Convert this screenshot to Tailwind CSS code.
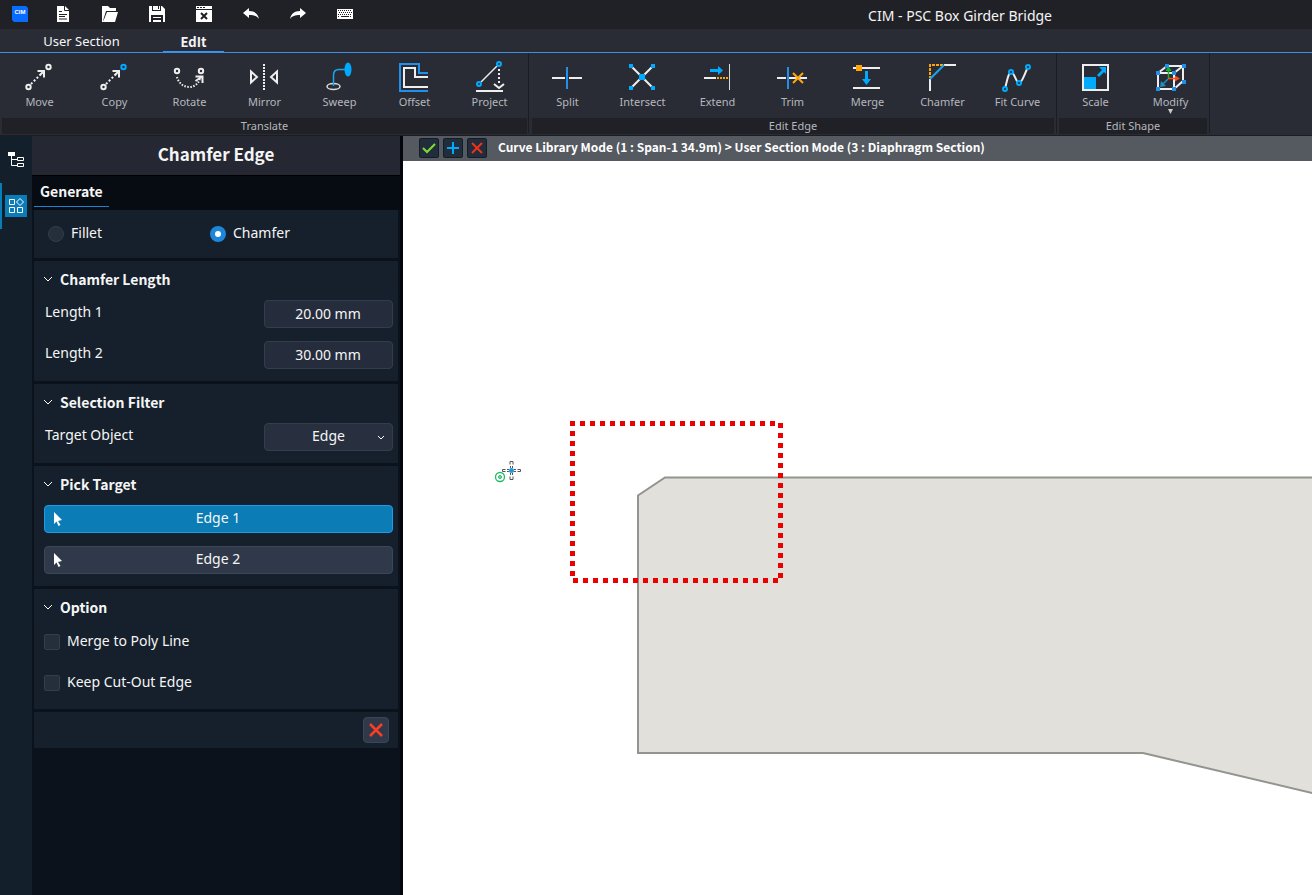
<!DOCTYPE html>
<html lang="en">
<head>
<meta charset="utf-8">
<title>CIM - PSC Box Girder Bridge</title>
<script src="https://cdn.jsdelivr.net/npm/@tailwindcss/browser@4"></script>
</head>
<body class="flex min-h-screen flex-col bg-[#0b121c] font-['Noto_Sans',sans-serif] text-sm text-[#f5f5f5]">

<header class="flex h-[29px] items-center bg-[#202126] pb-px">
  <div class="flex w-10 justify-center">
    <svg width="16" height="16" viewBox="0 0 16 16" aria-label="CIM"><path fill="#0a6cff" d="M0 0h14l2 2v14H2l-2-2z"/><text x="8" y="8" text-anchor="middle" font-size="6" font-weight="700" font-family="Liberation Sans, sans-serif" fill="#fff">CIM</text></svg>
  </div>
  <nav class="flex" aria-label="Quick access">
    <button class="flex w-[47px] justify-center pr-px" aria-label="New"><svg width="16" height="16" viewBox="0 0 16 16"><path fill="#fff" d="M2 0h8l4 4v12H2z"/><path stroke="#202126" d="M4 5.500h3M4 8.500h8M4 10.500h6M4 13h8M9.500 0v4.500H14" fill="none"/></svg></button>
    <button class="flex w-[47px] justify-center pr-px" aria-label="Open"><svg width="16" height="16" viewBox="0 0 16 16"><path fill="#fff" d="M0 0h6l2 2h6v3H4L1.500 13V16H0z"/><path fill="#fff" d="M5 6h11l-3 10H1z"/></svg></button>
    <button class="flex w-[47px] justify-center pr-px" aria-label="Save"><svg width="16" height="16" viewBox="0 0 16 16"><path fill="#fff" d="M0 0h3v5h9V0h1l3 3v13h-2V9H2v7H0zM5 0h4v3H5zM10 0h1v4H4V0h1v3h5zM4 11h8v1H4zM4 14h8v2H4z"/></svg></button>
    <button class="flex w-[47px] justify-center pr-px" aria-label="Close file"><svg width="16" height="16" viewBox="0 0 16 16"><path fill="#fff" d="M0 0h16v3H0zM0 4h16v12H0z"/><path stroke="#202126" d="M1 1.500h2M4 1.500h2M7 1.500h2"/><path stroke="#202126" stroke-width="2" d="M5 7l6 6M11 7l-6 6"/></svg></button>
    <button class="flex w-[47px] justify-center pr-px" aria-label="Undo"><svg width="16" height="16" viewBox="0 0 16 16"><path fill="#fff" d="M0 7l6-5v3c6 0 9 3 10 8-2-3-5-4-10-4v3z"/></svg></button>
    <button class="flex w-[47px] justify-center pr-px" aria-label="Redo"><svg width="16" height="16" viewBox="0 0 16 16"><path fill="#fff" d="M16 7l-6-5v3C4 5 1 8 0 13c2-3 5-4 10-4v3z"/></svg></button>
    <button class="flex w-[47px] justify-center pr-px" aria-label="Keyboard"><svg width="16" height="16" viewBox="0 0 16 16"><path fill="#fff" d="M0 3h16v10H0z"/><path stroke="#202126" stroke-dasharray="1 1" d="M1 4.500h14M2 6.500h13M1 8.500h14M1 10.500h2M13 10.500h2"/><path stroke="#202126" d="M4 10.500h8"/></svg></button>
  </nav>
  <h1 class="mr-[260px] ml-auto whitespace-nowrap pt-1">CIM - PSC Box Girder Bridge</h1>
</header>

<nav class="flex h-6 border-b border-[#3a8fe8] bg-[#2a2c35] text-[13px]" aria-label="Ribbon tabs">
  <a href="#" class="flex w-[163px] items-center justify-center pt-0.5">User Section</a>
  <a href="#" class="flex w-[61px] items-center justify-center border-b border-[#3a96f5] pt-1 font-semibold font-['Noto_Sans_CJK_KR',sans-serif]">EdIt</a>
</nav>

<div class="flex h-[83px] border-b border-[#1c1d22] bg-[#2a2c35] pl-0.5 text-[11px] text-[#b4b7be]">
  <section class="flex flex-col">
    <div class="flex h-[65px]">
      <button class="flex w-[75px] flex-col items-center gap-px pt-2"><svg width="33" height="32" viewBox="0 0 33 32" fill="none" stroke="#eee" stroke-width="2"><circle cx="5.500" cy="26" r="2.200"/><circle cx="25.500" cy="6" r="2.200"/><path stroke-dasharray="2 2" d="M8 23L20 11"/><path d="M14.500 10h6.500v6.500M21 10l-4 4"/></svg><span>Move</span></button>
      <button class="flex w-[75px] flex-col items-center gap-px pt-2"><svg width="33" height="32" viewBox="0 0 33 32" fill="none" stroke="#eee" stroke-width="2"><circle cx="5.500" cy="26" r="2.200"/><circle cx="25.500" cy="6" r="2.200" stroke="#00aaff"/><path stroke-dasharray="2 2" d="M8 23L20 11"/><path d="M14.500 10h6.500v6.500M21 10l-4 4"/></svg><span>Copy</span></button>
      <button class="flex w-[75px] flex-col items-center gap-px pt-2"><svg width="33" height="32" viewBox="0 0 33 32" fill="none" stroke="#eee" stroke-width="2"><circle cx="4" cy="10" r="2.200"/><circle cx="28" cy="10" r="2.200"/><path stroke-dasharray="1.500 1.500" d="M4 16c1 5 6 10 12 10s10-4 11-9"/><path d="M22.500 15.500h7v6.500M22.500 20l6-4"/></svg><span>Rotate</span></button>
      <button class="flex w-[75px] flex-col items-center gap-px pt-2"><svg width="33" height="32" viewBox="0 0 33 32" fill="none" stroke="#eee" stroke-width="2"><path stroke-dasharray="2 1" d="M16 3v26"/><path d="M3 10.500v11l6-5.500zM29 10.500v11l-6-5.500z"/></svg><span>Mirror</span></button>
      <button class="flex w-[75px] flex-col items-center gap-px pt-2"><svg width="33" height="32" viewBox="0 0 33 32" fill="none"><ellipse cx="10.500" cy="25.500" rx="6.500" ry="3" stroke="#ddd" stroke-width="1.500"/><path stroke="#1ba4f2" stroke-width="1.500" d="M10.500 25V14q0-5.500 5.500-5.500h6"/><ellipse cx="25" cy="8.500" rx="3.500" ry="7" fill="#00aaff"/></svg><span>Sweep</span></button>
      <button class="flex w-[75px] flex-col items-center gap-px pt-2"><svg width="33" height="32" viewBox="1 0 33 32" fill="none" stroke-width="2"><path stroke="#2090ea" d="M31 12h-9V3H3v27h28"/><path stroke="#eee" d="M31 16H18V7H7v19h24"/></svg><span>Offset</span></button>
      <button class="flex w-[75px] flex-col items-center gap-px pt-2"><svg width="33" height="32" viewBox="0 0 33 32" fill="none" stroke="#eee" stroke-width="2"><path stroke-width="1.500" d="M8 21L24 5"/><path stroke-dasharray="2 2" d="M26 8v16"/><path d="M21 23l5 4 5-4M3 30h27"/><circle cx="6" cy="23" r="2" stroke="#00aaff"/><circle cx="26" cy="3" r="2" stroke="#00aaff"/></svg><span>Project</span></button>
    </div>
    <h2 class="h-4 bg-[#202126] text-center leading-4">Translate</h2>
  </section>
  <div class="mx-px h-20 w-px bg-[#1c1d22]"></div>
  <section class="flex flex-col">
    <div class="flex h-[65px]">
      <button class="flex w-[75px] flex-col items-center gap-px pt-2"><svg width="33" height="32" viewBox="0 0 33 32" stroke="#eee" stroke-width="2"><path d="M1 17h13M18 17h13"/><path stroke="#2090ea" d="M16 6v22"/></svg><span>Split</span></button>
      <button class="flex w-[75px] flex-col items-center gap-px pt-2"><svg width="33" height="32" viewBox="0 0 33 32"><path stroke="#eee" stroke-width="2" d="M5 5l22 22M27 5L5 27"/><path fill="#00aaff" d="M3 3h4v4H3zM25 3h4v4h-4zM3 25h4v4H3zM25 25h4v4h-4zM13 13h6v6h-6z"/></svg><span>Intersect</span></button>
      <button class="flex w-[75px] flex-col items-center gap-px pt-2"><svg width="33" height="32" viewBox="-1 0 33 32" stroke-width="2"><path stroke="#eee" d="M2 17h12"/><path stroke="#ffa50a" stroke-dasharray="2 1" d="M15 17h11"/><path stroke="#ddd" stroke-width="1" d="M27.500 3v26"/><path fill="#00aaff" stroke="none" d="M8 8h8V5l5 4.500-5 4.500v-3H8z"/></svg><span>Extend</span></button>
      <button class="flex w-[75px] flex-col items-center gap-px pt-2"><svg width="33" height="32" viewBox="0 0 33 32" stroke="#eee" stroke-width="2"><path d="M1 17h9M13 17h18"/><path stroke="#2090ea" d="M12 6v22"/><path stroke="#ffa50a" d="M17 12l10 10M27 12L17 22"/></svg><span>Trim</span></button>
      <button class="flex w-[75px] flex-col items-center gap-px pt-2"><svg width="33" height="32" viewBox="1 0 33 32"><path stroke="#eee" stroke-width="2" d="M3 7h27M3 27h27"/><path fill="#ffa50a" d="M6 4h6v6H6z"/><path fill="#00aaff" d="M15 10h3v8h3l-4.500 6-4.500-6h3z"/></svg><span>Merge</span></button>
      <button class="flex w-[75px] flex-col items-center gap-px pt-2"><svg width="33" height="32" viewBox="0 0 33 32" fill="none" stroke="#eee" stroke-width="2"><path d="M18 4h12M4 18v12"/><path stroke="#ffa50a" stroke-dasharray="3 1" d="M17 4H4v13"/><path stroke="#1ba4f2" d="M4 18L18 4"/></svg><span>Chamfer</span></button>
      <button class="flex w-[75px] flex-col items-center gap-px pt-2"><svg width="33" height="32" viewBox="0 0 33 32" fill="none" stroke="#eee" stroke-width="2"><path d="M4 28C6 20 7 12 10 11s5 11 8 11 5-8 9-16"/><g stroke="#00aaff" fill="#2a2c35"><circle cx="4" cy="28" r="2"/><circle cx="10" cy="11" r="2"/><circle cx="18" cy="22" r="2"/><circle cx="27" cy="6" r="2"/></g></svg><span>Fit Curve</span></button>
    </div>
    <h2 class="mr-px ml-0.5 h-4 bg-[#202126] text-center leading-4">Edit Edge</h2>
  </section>
  <div class="mx-px h-20 w-px bg-[#1c1d22]"></div>
  <section class="flex flex-col">
    <div class="flex h-[65px]">
      <button class="flex w-[75px] flex-col items-center gap-px pt-2"><svg width="33" height="32" viewBox="0 0 33 32"><path fill="none" stroke="#eee" stroke-width="2" d="M4 4h25v25H4z"/><path fill="#00aaff" d="M5 16h12v12H5zM20 6h7v7l-2-2-5 5-2-2 5-5z"/></svg><span>Scale</span></button>
      <button class="relative flex w-[75px] flex-col items-center gap-px pt-2"><svg width="33" height="32" viewBox="0 0 33 32"><path fill="none" stroke="#eee" stroke-width="2" d="M4 12h16v16H4zM4 12l9-7h16L20 12M29 5v15l-9 8"/><path stroke="#18b52a" stroke-width="1.500" d="M14.500 17V8"/><path fill="#18b52a" d="M11.500 10l3-5 3 5z"/><path stroke="#ff4b14" stroke-width="1.500" d="M14 17.500h8"/><path fill="#ff4b14" d="M21 14.500l5 3-5 3z"/><path stroke="#1a8fc8" stroke-width="1.500" d="M14 18l-5 5"/><path fill="#1a8fc8" d="M7 20l5 5-6 1z"/><path fill="#2090ea" d="M2 10h4v4H2zM18 10h4v4h-4zM2 26h4v4H2zM18 26h4v4h-4zM11 3h4v4h-4zM28 3h4v4h-4zM28 19h4v4h-4z"/></svg><span>Modify</span><svg class="absolute top-14" width="5" height="5" viewBox="0 0 5 5"><path fill="#ccc" d="M0 0h5L2.500 5z"/></svg></button>
    </div>
    <h2 class="mx-px h-4 bg-[#202126] text-center leading-4">Edit Shape</h2>
  </section>
  <div class="mx-px h-20 w-px bg-[#1c1d22]"></div>
</div>

<div class="flex grow">
  <nav class="flex w-8 flex-col bg-[#141f2c]" aria-label="Side panels">
    <button class="flex h-[47px] items-center justify-center pb-px" aria-label="Tree"><svg width="16" height="16" viewBox="0 0 16 16" fill="none" stroke="#fff"><path fill="#fff" stroke="none" d="M0 1h7v4H0z"/><path d="M3.500 5v9.500h6M3.500 8.500h6M9.500 6.500h6v3h-6zM9.500 12.500h6v3h-6z"/></svg></button>
    <button class="flex h-[46px] items-center justify-end border-l-2 border-[#0a7db8] pr-[5px]" aria-label="Library"><span class="bg-[#0a7db8] p-[3px]"><svg width="16" height="16" viewBox="0 0 16 16" fill="none" stroke="#fff"><path d="M1.500 1.500h5v5h-5zM1.500 9.500h5v5h-5zM9.500 9.500h5v5h-5zM12 .5L15.500 4 12 7.500 8.500 4z"/></svg></span></button>
  </nav>

  <aside class="flex w-[371px] flex-col border-r-3 border-[#03060a]">
    <h2 class="h-10 border-b border-black bg-[#252832] text-center text-[17px] leading-9 font-semibold font-['Noto_Sans_CJK_KR',sans-serif]">Chamfer Edge</h2>
    <div class="flex h-[34px] bg-[#070c12] pl-0.5">
      <a href="#" class="h-[31px] w-[75px] border-b border-[#1a83d8] pl-1.5 leading-[30px] font-semibold font-['Noto_Sans_CJK_KR',sans-serif]">Generate</a>
    </div>
    <div class="flex flex-col gap-[3px] pr-0.5 pl-0.5">
      <div class="flex h-12 items-center bg-[#15202c] pl-3.5">
        <label class="flex w-[162px] items-center gap-[7px]"><input type="radio" name="kind" class="size-4 appearance-none rounded-full border border-[#343d4a] bg-[#252e3b]"><span class="pb-0.5">Fillet</span></label>
        <label class="flex items-center gap-[7px]"><input type="radio" name="kind" checked class="size-4 appearance-none rounded-full border-5 border-[#1e86da] bg-white"><span class="pb-0.5">Chamfer</span></label>
      </div>

      <section class="h-[120px] bg-[#15202c] pr-[5px] pl-2.5">
        <h3 class="flex h-[39px] items-center gap-2 pb-[3px] font-semibold font-['Noto_Sans_CJK_KR',sans-serif]"><svg width="8" height="6" viewBox="0 0 8 6" fill="none" stroke="#fff"><path d="M0 1l4 4 4-4"/></svg>Chamfer Length</h3>
        <div class="flex h-[41px] justify-between"><label for="l1" class="pl-px leading-6">Length 1</label><input id="l1" value="20.00 mm" class="h-7 w-[129px] rounded-sm border border-[#333d4b] bg-[#252d3d] pr-px pb-0.5 text-center"></div>
        <div class="flex justify-between"><label for="l2" class="pl-px leading-6">Length 2</label><input id="l2" value="30.00 mm" class="h-7 w-[129px] rounded-sm border border-[#333d4b] bg-[#252d3d] pr-px pb-0.5 text-center"></div>
      </section>

      <section class="h-[79px] bg-[#15202c] pr-[5px] pl-2.5">
        <h3 class="flex h-[39px] items-center gap-2 pb-[3px] font-semibold font-['Noto_Sans_CJK_KR',sans-serif]"><svg width="8" height="6" viewBox="0 0 8 6" fill="none" stroke="#fff"><path d="M0 1l4 4 4-4"/></svg>Selection Filter</h3>
        <div class="flex justify-between"><label for="target" class="pl-px leading-6">Target Object</label>
          <div class="relative"><select id="target" class="h-7 w-[129px] appearance-none rounded-sm border border-[#333d4b] bg-[#28303f] pb-0.5 text-center"><option>Edge</option></select><svg class="pointer-events-none absolute top-3 right-2" width="8" height="6" viewBox="0 0 8 6" fill="none" stroke="#fff"><path d="M1 1l3 3 3-3"/></svg></div>
        </div>
      </section>

      <section class="h-[120px] bg-[#15202c] pr-[5px] pl-2.5">
        <h3 class="flex h-[39px] items-center gap-2 pb-[3px] font-semibold font-['Noto_Sans_CJK_KR',sans-serif]"><svg width="8" height="6" viewBox="0 0 8 6" fill="none" stroke="#fff"><path d="M0 1l4 4 4-4"/></svg>Pick Target</h3>
        <div class="flex flex-col gap-[13px]">
          <button class="flex h-7 items-center rounded-sm border border-[#1a9bf0] bg-[#0b7cb6] pr-[19px] pl-2"><svg width="10" height="14" viewBox="0 0 10 14"><path fill="#fff" d="M1 0l8 8-4 1 2.500 4-2 1L3.500 9.500 1 12z"/></svg><span class="grow pb-0.5">Edge 1</span></button>
          <button class="flex h-7 items-center rounded-sm border border-[#3b4656] bg-[#2f394a] pr-[19px] pl-2"><svg width="10" height="14" viewBox="0 0 10 14"><path fill="#fff" d="M1 0l8 8-4 1 2.500 4-2 1L3.500 9.500 1 12z"/></svg><span class="grow pb-0.5">Edge 2</span></button>
        </div>
      </section>

      <section class="h-[120px] bg-[#15202c] pr-[5px] pl-2.5">
        <h3 class="flex h-[39px] items-center gap-2 pb-[3px] font-semibold font-['Noto_Sans_CJK_KR',sans-serif]"><svg width="8" height="6" viewBox="0 0 8 6" fill="none" stroke="#fff"><path d="M0 1l4 4 4-4"/></svg>Option</h3>
        <label class="flex h-7 items-center gap-[7px]"><input type="checkbox" class="size-4 appearance-none rounded-xs border border-[#343d4a] bg-[#252e3b]"><span class="pb-0.5">Merge to Poly Line</span></label>
        <label class="mt-[13px] flex h-7 items-center gap-[7px]"><input type="checkbox" class="size-4 appearance-none rounded-xs border border-[#343d4a] bg-[#252e3b]"><span class="pb-0.5">Keep Cut-Out Edge</span></label>
      </section>

      <div class="flex h-9 items-center justify-end bg-[#15202c] pr-[9px]">
        <button class="flex size-[26px] items-center justify-center rounded-sm border border-[#3b4656] bg-[#2f394a]" aria-label="Close"><svg width="14" height="14" viewBox="0 0 14 14"><path stroke="#ff3d22" stroke-width="2.500" d="M1 1l12 12M13 1L1 13"/></svg></button>
      </div>
    </div>
  </aside>

  <main class="flex grow flex-col bg-white">
    <div class="flex h-[25px] items-center gap-1 bg-[#555960] pb-px pl-4">
      <button class="flex size-5 items-center justify-center rounded-xs border border-[#141c28] bg-[#222d3c]" aria-label="Apply"><svg width="14" height="14" viewBox="0 0 14 14" fill="none"><path stroke="#7fdc32" stroke-width="2" d="M1 7l4 4 8-8"/></svg></button>
      <button class="flex size-5 items-center justify-center rounded-xs border border-[#141c28] bg-[#222d3c]" aria-label="Add"><svg width="14" height="14" viewBox="0 0 14 14"><path stroke="#00aaff" stroke-width="2" d="M7 1v12M1 7h12"/></svg></button>
      <button class="flex size-5 items-center justify-center rounded-xs border border-[#141c28] bg-[#222d3c]" aria-label="Cancel"><svg width="14" height="14" viewBox="0 0 14 14"><path stroke="#f03218" stroke-width="2" d="M2 2l10 10M12 2L2 12"/></svg></button>
      <p class="pb-0.5 pl-[7px] text-[12px] font-semibold whitespace-nowrap text-white font-['Noto_Sans_CJK_KR',sans-serif]">Curve Library Mode (1 : Span-1 34.9m) &gt; User Section Mode (3 : Diaphragm Section)</p>
    </div>
    <div class="flex grow overflow-hidden">
      <svg class="min-w-0 grow" fill="none" role="img" aria-label="Diaphragm section">
        <path fill="#e1e0db" stroke="#93938f" stroke-width="2" d="M4000 316.500H262L235 334.500V592H740L4000 1364z"/>
        <g stroke="#ea0000" stroke-width="5" stroke-dasharray="5 5"><path d="M167 262.500H372"/><path d="M169.500 270V415"/><path d="M170 419.500H375"/><path d="M377.500 262V417"/></g>
        <g stroke="#555"><path d="M107 303.500v-3h3v3M107.500 305v2M109.500 305v2M107 315.500v3h3v-3M107.500 312v2M109.500 312v2M102.500 308.500h-3v2h3M104 308.500h2M104 310.500h2M114.500 308.500h3v2h-3M111 308.500h2M111 310.500h2"/></g>
        <circle cx="108.500" cy="309.500" r="2.500" fill="#1e9be0"/>
        <circle cx="97" cy="316" r="4.500" stroke="#1fbb63" stroke-width="1.300"/><circle cx="97" cy="316" r="1.500" fill="#8fd9ae" stroke="#1fbb63"/>
      </svg>
    </div>
  </main>
</div>
</body>
</html>
